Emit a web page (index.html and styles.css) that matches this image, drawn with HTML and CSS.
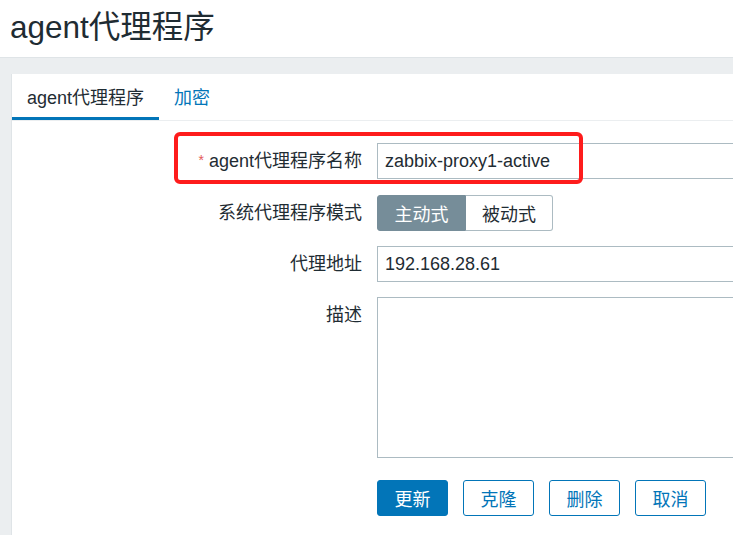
FILE: index.html
```html
<!DOCTYPE html>
<html lang="zh">
<head>
<meta charset="utf-8">
<title>agent代理程序</title>
<link rel="stylesheet" href="styles.css">
</head>
<body>
<header class="header">
  <h1 class="title">agent代理程序</h1>
</header>
<main class="main">
  <section class="card">
    <nav class="tabs">
      <a class="tab tab-active">agent代理程序</a>
      <a class="tab">加密</a>
    </nav>
    <form class="form">
      <div class="row">
        <label class="label"><span class="req">*</span> agent代理程序名称</label>
        <div class="field"><input class="input" type="text" value="zabbix-proxy1-active"></div>
      </div>
      <div class="row">
        <label class="label">系统代理程序模式</label>
        <div class="field">
          <div class="seg">
            <span class="seg-item seg-on">主动式</span>
            <span class="seg-item seg-off">被动式</span>
          </div>
        </div>
      </div>
      <div class="row">
        <label class="label">代理地址</label>
        <div class="field"><input class="input" type="text" value="192.168.28.61"></div>
      </div>
      <div class="row">
        <label class="label">描述</label>
        <div class="field"><textarea class="textarea"></textarea></div>
      </div>
      <div class="row row-buttons">
        <div class="label"></div>
        <div class="field buttons">
          <button type="button" class="btn btn-primary">更新</button>
          <button type="button" class="btn btn-alt">克隆</button>
          <button type="button" class="btn btn-alt">删除</button>
          <button type="button" class="btn btn-alt">取消</button>
        </div>
      </div>
    </form>
    <div class="highlight"></div>
  </section>
</main>
</body>
</html>
```
FILE: styles.css
```css
* { box-sizing: border-box; }
html, body {
  margin: 0;
  padding: 0;
}
body {
  background: #ebeef0;
  font-family: "Liberation Sans", Arial, "Noto Sans CJK SC", sans-serif;
  color: #1f2c33;
  font-size: 18px;
  overflow: hidden;
  width: 733px;
  height: 535px;
}
.header {
  background: #ffffff;
  height: 58px;
  border-bottom: 1px solid #dfe4e7;
  padding: 0 10px;
  display: flex;
  align-items: center;
}
.title {
  margin: 0;
  font-weight: normal;
  font-size: 31.5px;
  line-height: 36px;
  position: relative;
  top: -2px;
  color: #1f2c33;
}
.main {
  padding: 16px 0 0 11px;
  overflow: hidden;
  height: 477px;
}
.card {
  position: relative;
  background: #ffffff;
  border-left: 1px solid #dfe4e7;
  height: 470px;
  overflow: hidden;
}
.tabs {
  display: flex;
  border-bottom: 1px solid #ebeef0;
  height: 47px;
}
.tab {
  display: flex;
  align-items: center;
  padding: 0 15px;
  height: 46px;
  border-bottom: 3px solid transparent;
  color: #0275b8;
  font-size: 18px;
  white-space: nowrap;
}
.tab-active {
  color: #1f2c33;
  border-bottom-color: #0275b8;
}
.form {
  display: flex;
  flex-direction: column;
  gap: 15px;
  padding-top: 22px;
}
.row {
  display: flex;
  align-items: flex-start;
  gap: 15px;
}
.label {
  width: 350px;
  flex: none;
  text-align: right;
  line-height: 36px;
  font-size: 18px;
  color: #1f2c33;
  white-space: nowrap;
}
.req {
  color: #e45959;
  font-size: 14px;
  position: relative;
  top: -2px;
}
.field {
  flex: none;
}
.input {
  display: block;
  width: 400px;
  height: 36px;
  border: 1px solid #acbbc2;
  padding: 0 7px;
  font-family: "Liberation Sans", Arial, "Noto Sans CJK SC", sans-serif;
  font-size: 18px;
  color: #1f2c33;
  background: #ffffff;
  outline: none;
}
.textarea {
  display: block;
  width: 400px;
  height: 161px;
  border: 1px solid #acbbc2;
  resize: none;
  outline: none;
  font-family: "Liberation Sans", Arial, "Noto Sans CJK SC", sans-serif;
  font-size: 18px;
}
.seg {
  display: flex;
  height: 36px;
}
.seg-item {
  display: flex;
  align-items: center;
  justify-content: center;
  height: 36px;
  font-size: 18px;
}
.seg-on {
  width: 89px;
  background: #768d99;
  color: #ffffff;
  border: 1px solid #768d99;
  border-radius: 3px 0 0 3px;
}
.seg-off {
  width: 87px;
  background: #ffffff;
  color: #1f2c33;
  border: 1px solid #acbbc2;
  border-left: none;
  border-radius: 0 3px 3px 0;
}
.row-buttons {
  margin-top: 7px;
}
.buttons {
  display: flex;
  gap: 15px;
}
.btn {
  width: 71px;
  height: 36px;
  border-radius: 3px;
  font-family: "Liberation Sans", Arial, "Noto Sans CJK SC", sans-serif;
  font-size: 18px;
  padding: 0;
  cursor: pointer;
}
.btn-primary {
  background: #0275b8;
  border: 1px solid #0275b8;
  color: #ffffff;
}
.btn-alt {
  background: #ffffff;
  border: 1px solid #0275b8;
  color: #0275b8;
}
.highlight {
  position: absolute;
  left: 162px;
  top: 58px;
  width: 409px;
  height: 52px;
  border: 4px solid #fe1c1c;
  border-radius: 6px;
  pointer-events: none;
}
```
